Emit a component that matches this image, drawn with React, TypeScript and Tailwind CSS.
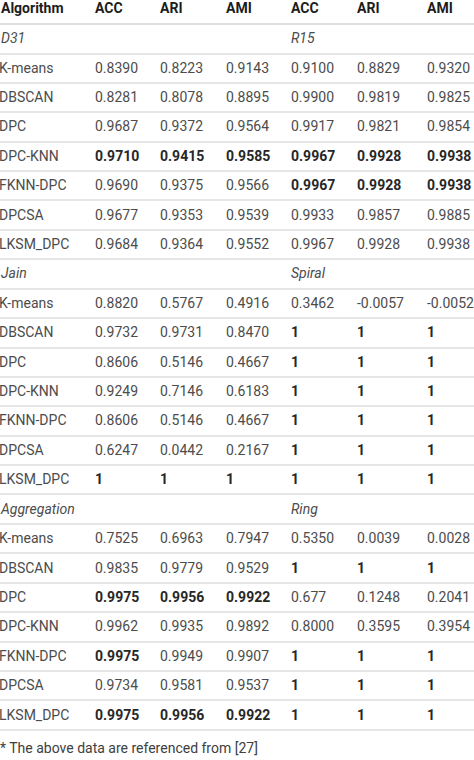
import React from "react";

type Group = { left: string; right: string; rows: [string, string[]][] };

const groups: Group[] = [
  {
    left: "D31",
    right: "R15",
    rows: [
      ["K-means", ["0.8390", "0.8223", "0.9143", "0.9100", "0.8829", "0.9320"]],
      ["DBSCAN", ["0.8281", "0.8078", "0.8895", "0.9900", "0.9819", "0.9825"]],
      ["DPC", ["0.9687", "0.9372", "0.9564", "0.9917", "0.9821", "0.9854"]],
      ["DPC-KNN", ["*0.9710", "*0.9415", "*0.9585", "*0.9967", "*0.9928", "*0.9938"]],
      ["FKNN-DPC", ["0.9690", "0.9375", "0.9566", "*0.9967", "*0.9928", "*0.9938"]],
      ["DPCSA", ["0.9677", "0.9353", "0.9539", "0.9933", "0.9857", "0.9885"]],
      ["LKSM_DPC", ["0.9684", "0.9364", "0.9552", "0.9967", "0.9928", "0.9938"]],
    ],
  },
  {
    left: "Jain",
    right: "Spiral",
    rows: [
      ["K-means", ["0.8820", "0.5767", "0.4916", "0.3462", "-0.0057", "-0.0052"]],
      ["DBSCAN", ["0.9732", "0.9731", "0.8470", "*1", "*1", "*1"]],
      ["DPC", ["0.8606", "0.5146", "0.4667", "*1", "*1", "*1"]],
      ["DPC-KNN", ["0.9249", "0.7146", "0.6183", "*1", "*1", "*1"]],
      ["FKNN-DPC", ["0.8606", "0.5146", "0.4667", "*1", "*1", "*1"]],
      ["DPCSA", ["0.6247", "0.0442", "0.2167", "*1", "*1", "*1"]],
      ["LKSM_DPC", ["*1", "*1", "*1", "*1", "*1", "*1"]],
    ],
  },
  {
    left: "Aggregation",
    right: "Ring",
    rows: [
      ["K-means", ["0.7525", "0.6963", "0.7947", "0.5350", "0.0039", "0.0028"]],
      ["DBSCAN", ["0.9835", "0.9779", "0.9529", "*1", "*1", "*1"]],
      ["DPC", ["*0.9975", "*0.9956", "*0.9922", "0.677", "0.1248", "0.2041"]],
      ["DPC-KNN", ["0.9962", "0.9935", "0.9892", "0.8000", "0.3595", "0.3954"]],
      ["FKNN-DPC", ["*0.9975", "0.9949", "0.9907", "*1", "*1", "*1"]],
      ["DPCSA", ["0.9734", "0.9581", "0.9537", "*1", "*1", "*1"]],
      ["LKSM_DPC", ["*0.9975", "*0.9956", "*0.9922", "*1", "*1", "*1"]],
    ],
  },
];

const cols = "grid grid-cols-[95px_65px_66px_65px_66px_70px_47px]";

function Cell({ v }: { v: string }) {
  const bold = v.startsWith("*");
  const text = bold ? v.slice(1) : v;
  return (
    <div className={bold ? "whitespace-nowrap font-bold text-[#272727]" : "whitespace-nowrap text-[#4c4c4c]"}>
      {text}
    </div>
  );
}

export default function App() {
  return (
    <div
      className="w-[474px] h-[760px] overflow-hidden bg-white text-[14px]"
      style={{ fontFamily: "Roboto, 'Noto Sans', sans-serif" }}
    >
      <div className={`${cols} h-[25px] border-b-2 border-[#dedede] items-start leading-[17px] font-bold text-[#1c1c1c]`}>
        <div className="pl-px">Algorithm</div>
        <div>ACC</div>
        <div>ARI</div>
        <div>AMI</div>
        <div>ACC</div>
        <div>ARI</div>
        <div>AMI</div>
      </div>
      {groups.map((g) => (
        <React.Fragment key={g.left}>
          <div className={`${cols} h-[29.5px] border-b-2 border-[#e6e6e6] items-center italic text-[#4c4c4c]`}>
            <div className="pl-px">{g.left}</div>
            <div />
            <div />
            <div />
            <div>{g.right}</div>
            <div />
            <div />
          </div>
          {g.rows.map(([name, vals]) => (
            <div
              key={g.left + name}
              className={`${cols} h-[29.4px] border-b-2 border-[#e6e6e6] items-center`}
            >
              <div className="-ml-px whitespace-nowrap text-[#4c4c4c]">{name}</div>
              {vals.map((v, i) => (
                <Cell key={i} v={v} />
              ))}
            </div>
          ))}
        </React.Fragment>
      ))}
      <div className="pt-[7px] leading-5 text-[#404040] whitespace-nowrap">
        * The above data are referenced from [27]
      </div>
    </div>
  );
}
